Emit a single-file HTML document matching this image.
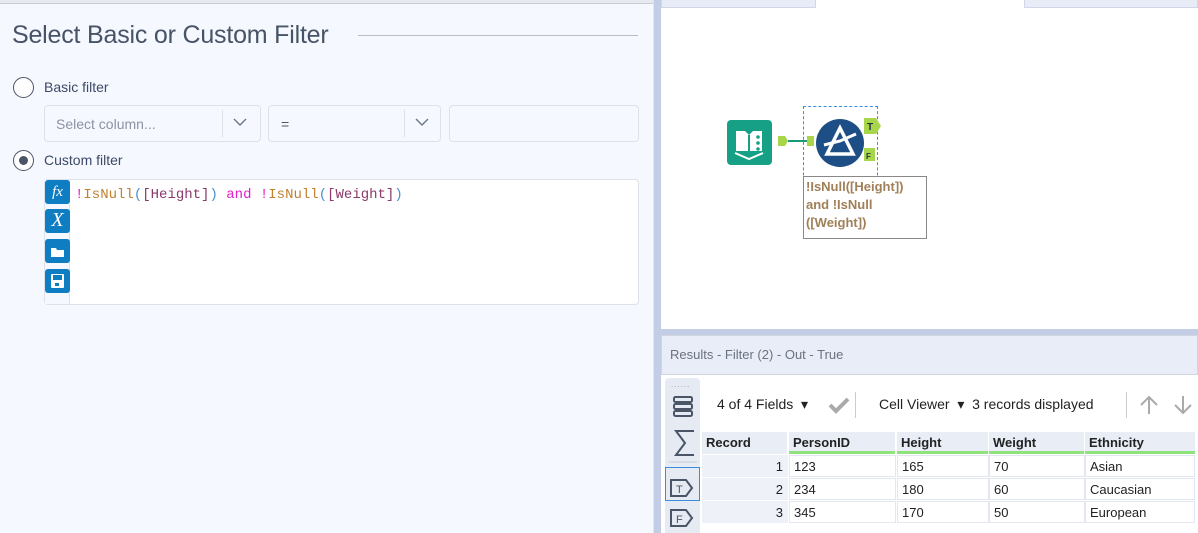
<!DOCTYPE html>
<html><head><meta charset="utf-8"><style>
*{margin:0;padding:0;box-sizing:border-box}
body{width:1198px;height:533px;overflow:hidden;background:#fff;font-family:"Liberation Sans",sans-serif;position:relative}
.a{position:absolute}
.t{font-size:14px;color:#3d4a66}
.mono{font-family:"Liberation Mono",monospace;font-size:14px}
.cell{position:absolute;height:22px;background:#fff;border:1px solid #e3e7ef;font-size:13px;color:#222;padding:3px 4px}
.hd{position:absolute;height:22px;background:#e8edf6;font-size:13px;font-weight:bold;color:#222;padding:3px 4px;border-bottom:3px solid #8fe37a}
.ib{position:absolute;left:45px;width:25px;height:24px;background:#0f7dc2;border-radius:3px;color:#fff;text-align:center}
</style></head><body>
<div class="a" style="left:0;top:0;width:653px;height:533px;background:#f5f8fe"></div>
<div class="a" style="left:0;top:0;width:653px;height:4px;background:#e6e9ef;border-bottom:1px solid #c8ccd4"></div>
<div class="a" style="left:653px;top:0;width:8px;height:533px;background:#c3cee6;border-left:1px solid #dfe4ee"></div>
<div class="a" style="left:12px;top:21px;font-size:25px;color:#475366;letter-spacing:-0.2px">Select Basic or Custom Filter</div>
<div class="a" style="left:358px;top:35px;width:280px;height:1px;background:#b8bec8"></div>
<div class="a" style="left:13px;top:77px;width:21px;height:21px;border:1.5px solid #4a5568;border-radius:50%;background:#fff"></div>
<div class="a t" style="left:44px;top:79px">Basic filter</div>
<div class="a" style="left:44px;top:105px;width:217px;height:37px;border:1px solid #dde2ea;border-radius:4px;background:#f5f8fe"></div>
<div class="a" style="left:56px;top:116px;font-size:14px;color:#8b94a5">Select column...</div>
<div class="a" style="left:222px;top:110px;width:1px;height:27px;background:#dde2ea"></div>
<div class="a" style="left:268px;top:105px;width:173px;height:37px;border:1px solid #dde2ea;border-radius:4px;background:#f5f8fe"></div>
<div class="a" style="left:281px;top:116px;font-size:14px;color:#555">=</div>
<div class="a" style="left:404px;top:110px;width:1px;height:27px;background:#dde2ea"></div>
<svg class="a" style="left:232px;top:117px" width="16" height="10"><path d="M2 2l6 6 6-6" stroke="#6b7689" fill="none" stroke-width="1.4"/></svg>
<svg class="a" style="left:414px;top:117px" width="16" height="10"><path d="M2 2l6 6 6-6" stroke="#6b7689" fill="none" stroke-width="1.4"/></svg>
<div class="a" style="left:449px;top:105px;width:190px;height:37px;border:1px solid #dde2ea;border-radius:4px;background:#f5f8fe"></div>
<div class="a" style="left:13px;top:150px;width:21px;height:21px;border:1.5px solid #4a5568;border-radius:50%;background:#fff"></div>
<div class="a" style="left:19px;top:156px;width:9px;height:9px;border-radius:50%;background:#4a5568"></div>
<div class="a t" style="left:44px;top:152px">Custom filter</div>
<div class="a" style="left:44px;top:179px;width:595px;height:126px;border:1px solid #dde2ea;border-radius:4px;background:#fff"></div>
<div class="a" style="left:45px;top:180px;width:25px;height:124px;background:#f5f8fe;border-right:1px solid #dde2ea"></div>
<div class="ib" style="top:180px;font-family:'Liberation Serif',serif;font-style:italic;font-size:15px;line-height:24px">fx</div>
<div class="ib" style="top:209px;font-family:'Liberation Serif',serif;font-style:italic;font-size:20px;line-height:22px">X</div>
<div class="ib" style="top:239px"><svg width="25" height="24"><path d="M6 9h5l1 2h7v7H6z" fill="#fff"/></svg></div>
<div class="ib" style="top:269px"><svg width="25" height="24"><rect x="6" y="5" width="13" height="14" rx="1" fill="#fff"/><rect x="8" y="6" width="9" height="5" fill="#0f7dc2"/><rect x="10" y="14" width="4" height="3" fill="#0f7dc2"/></svg></div>
<div class="a mono" style="left:75px;top:187px;white-space:pre"><span style="color:#e01ec8">!</span><span style="color:#c08030">IsNull</span><span style="color:#4a8fd0">(</span><span style="color:#8a3a6a">[Height]</span><span style="color:#4a8fd0">)</span> <span style="color:#e01ec8">and !</span><span style="color:#c08030">IsNull</span><span style="color:#4a8fd0">(</span><span style="color:#8a3a6a">[Weight]</span><span style="color:#4a8fd0">)</span></div>
<div class="a" style="left:661px;top:0;width:155px;height:8px;background:#e8ecf7;border:1px solid #cfd6e8;border-top:none"></div>
<div class="a" style="left:1024px;top:0;width:174px;height:8px;background:#e8ecf7;border:1px solid #cfd6e8;border-top:none"></div>
<div class="a" style="left:727px;top:120px;width:45px;height:45px;background:#16a085;border-radius:4px"></div>
<svg class="a" style="left:727px;top:120px" width="45" height="45"><path d="M9 11h9l4 4 4-4h9v20H9z" fill="#fff"/><circle cx="31" cy="17" r="1.8" fill="#16a085"/><circle cx="31" cy="23" r="1.8" fill="#16a085"/><circle cx="31" cy="29" r="1.8" fill="#16a085"/><path d="M22 15v16" stroke="#16a085" stroke-width="2"/><path d="M8 33l14 6 14-6" stroke="#fff" stroke-width="2" fill="none"/></svg>
<svg class="a" style="left:776px;top:133px" width="40" height="16"><path d="M2 3h7l3 5-3 5H2z" fill="#a8d64a"/><path d="M12 8h19" stroke="#1a9a7a" stroke-width="2"/><rect x="31" y="3" width="7" height="10" fill="#a8d64a"/></svg>
<div class="a" style="left:803px;top:106px;width:75px;height:90px;border:1px dashed #3a8de0"></div>
<div class="a" style="left:816px;top:119px;width:48px;height:48px;border-radius:50%;background:#1d4e86"></div>
<svg class="a" style="left:816px;top:119px" width="48" height="48"><path d="M24 9L11 35h26z" fill="none" stroke="#fff" stroke-width="3.5"/><path d="M8 26l16-4 16-7" stroke="#fff" stroke-width="3"/></svg>
<svg class="a" style="left:864px;top:118px" width="18" height="46"><path d="M0 0h12l5 8-5 8H0z" fill="#a8d64a"/><text x="3" y="12" font-size="10" font-weight="bold" fill="#234" font-family="Liberation Sans">T</text><rect x="0" y="30" width="11" height="13" fill="#a8d64a"/><text x="2" y="41" font-size="8" font-weight="bold" fill="#234" font-family="Liberation Sans">F</text></svg>
<div class="a" style="left:803px;top:176px;width:124px;height:63px;border:1px solid #888;background:#fff;font-size:13px;font-weight:bold;color:#a08058;line-height:18px;padding:1px 2px">!IsNull([Height])<br>and !IsNull<br>([Weight])</div>
<div class="a" style="left:661px;top:329px;width:537px;height:6px;background:#c3cee6"></div>
<div class="a" style="left:661px;top:335px;width:537px;height:40px;background:#e9edf7;border:1px solid #d0d5e0"></div>
<div class="a" style="left:670px;top:347px;font-size:13px;color:#6a7180">Results - Filter (2) - Out - True</div>
<div class="a" style="left:661px;top:375px;width:537px;height:158px;background:#fff"></div>
<div class="a" style="left:665px;top:378px;width:35px;height:155px;background:#e6eaf3;border-radius:4px 4px 0 0"></div>
<div class="a" style="left:671px;top:380px;font-size:8px;color:#99a;letter-spacing:1px">......</div>
<svg class="a" style="left:665px;top:390px" width="36" height="143"><g fill="none" stroke="#4a5568" stroke-width="2"><rect x="9" y="7" width="18" height="5" rx="1.5"/><rect x="9" y="14" width="18" height="5" rx="1.5"/><rect x="9" y="21" width="18" height="5" rx="1.5"/><path d="M29 41h-18l9 12-9 12h18"/><path d="M6 90h15l6 8-6 8H6z"/><path d="M6 120h15l6 8-6 8H6z"/></g><path d="M4 72h28" stroke="#c8ccd4"/><text x="11" y="103" font-size="11" fill="#4a5568" font-family="Liberation Sans">T</text><text x="11" y="133" font-size="11" fill="#4a5568" font-family="Liberation Sans">F</text></svg>
<div class="a" style="left:665px;top:467px;width:35px;height:34px;border:1.5px solid #3a8de0"></div>
<div class="a" style="left:717px;top:396px;font-size:14px;color:#222">4 of 4 Fields &nbsp;▾</div>
<svg class="a" style="left:828px;top:396px" width="22" height="18"><path d="M2 9l6 6L20 3" stroke="#aaa" stroke-width="4" fill="none"/></svg>
<div class="a" style="left:855px;top:392px;width:1px;height:26px;background:#ccc"></div>
<div class="a" style="left:879px;top:396px;font-size:14px;color:#222">Cell Viewer &nbsp;▾&nbsp; 3 records displayed</div>
<div class="a" style="left:1126px;top:392px;width:1px;height:26px;background:#ccc"></div>
<svg class="a" style="left:1137px;top:394px" width="60" height="22"><path d="M12 20V3M4 11l8-8 8 8M46 2v17M38 11l8 8 8-8" stroke="#aaa" stroke-width="2" fill="none"/></svg>
<div class="hd" style="left:702px;top:432px;width:85px;border-bottom-color:#e8edf6">Record</div>
<div class="hd" style="left:789px;top:432px;width:106px">PersonID</div>
<div class="hd" style="left:897px;top:432px;width:91px">Height</div>
<div class="hd" style="left:989px;top:432px;width:95px">Weight</div>
<div class="hd" style="left:1085px;top:432px;width:110px">Ethnicity</div>
<div class="cell" style="left:702px;top:455px;width:86px;text-align:right;background:#eef1f7;border-color:#eef1f7">1</div>
<div class="cell" style="left:789px;top:455px;width:107px">123</div><div class="cell" style="left:897px;top:455px;width:92px">165</div><div class="cell" style="left:989px;top:455px;width:96px">70</div><div class="cell" style="left:1085px;top:455px;width:110px">Asian</div>
<div class="cell" style="left:702px;top:478px;width:86px;text-align:right;background:#eef1f7;border-color:#eef1f7">2</div>
<div class="cell" style="left:789px;top:478px;width:107px">234</div><div class="cell" style="left:897px;top:478px;width:92px">180</div><div class="cell" style="left:989px;top:478px;width:96px">60</div><div class="cell" style="left:1085px;top:478px;width:110px">Caucasian</div>
<div class="cell" style="left:702px;top:501px;width:86px;text-align:right;background:#eef1f7;border-color:#eef1f7">3</div>
<div class="cell" style="left:789px;top:501px;width:107px">345</div><div class="cell" style="left:897px;top:501px;width:92px">170</div><div class="cell" style="left:989px;top:501px;width:96px">50</div><div class="cell" style="left:1085px;top:501px;width:110px">European</div>
</body></html>
